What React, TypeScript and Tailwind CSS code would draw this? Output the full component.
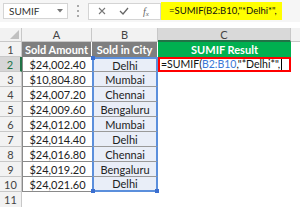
import React from "react";

const rows = [
  { n: 2, amt: "$24,002.40", city: "Delhi" },
  { n: 3, amt: "$10,804.80", city: "Mumbai" },
  { n: 4, amt: "$24,007.20", city: "Chennai" },
  { n: 5, amt: "$24,009.60", city: "Bengaluru" },
  { n: 6, amt: "$24,012.00", city: "Mumbai" },
  { n: 7, amt: "$24,014.40", city: "Delhi" },
  { n: 8, amt: "$24,016.80", city: "Chennai" },
  { n: 9, amt: "$24,019.20", city: "Bengaluru" },
  { n: 10, amt: "$24,021.60", city: "Delhi" },
];

const font = { fontFamily: "Lato, 'Open Sans', sans-serif" };

function FormulaBar() {
  return (
    <div className="flex h-[22px] items-center bg-[#f6f6f6]">
      <div className="ml-[3px] flex h-[16px] w-[65px] items-center justify-between border border-[#d4d4d4] bg-white pl-[5px] pr-[4px] text-[10px] text-[#333]">
        <span>SUMIF</span>
        <svg width="6" height="4" viewBox="0 0 6 4">
          <path d="M0 0h6L3 3.5z" fill="#777" />
        </svg>
      </div>
      <div className="ml-[9px] flex h-[12px] w-[2px] flex-col justify-between">
        <span className="block h-[2px] w-[2px] bg-[#aaa]" />
        <span className="block h-[2px] w-[2px] bg-[#aaa]" />
        <span className="block h-[2px] w-[2px] bg-[#aaa]" />
      </div>
      <div className="ml-[9px] flex h-[17px] w-[73px] items-center border border-[#d4d4d4] bg-white text-[#666]">
        <svg className="ml-[9px]" width="8" height="8" viewBox="0 0 8 8">
          <path d="M1 1l6 6M7 1L1 7" stroke="#777" strokeWidth="1.1" />
        </svg>
        <svg className="ml-[13px]" width="10" height="8" viewBox="0 0 10 8">
          <path d="M1 4l3 3 5-6" stroke="#666" strokeWidth="1.3" fill="none" />
        </svg>
        <span className="ml-[14px] text-[10px] italic" style={{ fontFamily: "'Liberation Serif', serif" }}>
          f<sub className="text-[7px]">x</sub>
        </span>
      </div>
      <div className="flex h-[18px] w-[121px] items-center whitespace-nowrap bg-[#ffff00] pl-[8px] text-[9.5px] text-[#111]">
        =SUMIF(B2:B10,"*Delhi*",
      </div>
    </div>
  );
}

export default function App() {
  return (
    <div className="h-[207px] w-[300px] overflow-hidden bg-white" style={font}>
      <FormulaBar />
      <div className="h-[6px] bg-white" />
      <div className="grid grid-cols-[22px_70px_66px_133px_1fr] grid-rows-[14px_repeat(11,15px)] text-[11px] leading-none">
        {/* header row */}
        <div className="relative border-b border-r border-[#c8c8c8] bg-[#f2f2f2]">
          <svg className="absolute bottom-[2px] right-[2px]" width="9" height="9" viewBox="0 0 9 9">
            <path d="M9 0v9H0z" fill="#c0c0c0" />
          </svg>
        </div>
        <div className="flex items-center justify-center border-b border-r border-[#c8c8c8] bg-[#f2f2f2] text-[#444]">A</div>
        <div className="flex items-center justify-center border-b border-r border-[#c8c8c8] bg-[#f2f2f2] text-[#444]">B</div>
        <div className="flex items-center justify-center border-b-2 border-r border-b-[#217346] border-r-[#c8c8c8] bg-[#d9d9d9] text-[#444]">C</div>
        <div className="border-b border-[#c8c8c8] bg-[#f2f2f2]" />

        {/* row 1 */}
        <div className="flex items-center justify-center border-b border-r border-[#c8c8c8] bg-[#f2f2f2] text-[#444]">1</div>
        <div className="flex items-center justify-center border-r border-white bg-[#7f7f7f] font-bold text-white">Sold Amount</div>
        <div className="flex items-center justify-center border-r border-white bg-[#7f7f7f] font-bold text-white">Sold in City</div>
        <div className="flex items-center justify-center bg-[#00b050] font-bold text-white">SUMIF Result</div>
        <div />

        {rows.map((r, i) => {
          const first = i === 0;
          const last = i === rows.length - 1;
          return (
            <React.Fragment key={r.n}>
              <div
                className={
                  first
                    ? "flex items-center justify-center border-b border-r-2 border-b-[#c8c8c8] border-r-[#217346] bg-[#d6d6d6] text-[#217346]"
                    : "flex items-center justify-center border-b border-r border-[#c8c8c8] bg-[#f2f2f2] text-[#444]"
                }
              >
                {r.n}
              </div>
              <div className="flex items-center justify-center border-b border-l border-[#8a8a8a] text-[#222]">{r.amt}</div>
              <div
                className={
                  "relative flex items-center justify-center border-x-2 border-x-[#5b8fdc] bg-[#e9eef8] text-[#222] " +
                  (last ? "border-b-2 border-b-[#5b8fdc]" : "border-b border-b-[#9a9a9a]") +
                  (first ? " border-t-2 border-t-[#5b8fdc]" : "")
                }
              >
                {r.city}
                {first && <span className="absolute -left-[3px] -top-[3px] h-[4px] w-[4px] bg-[#3b6fd0]" />}
                {last && (
                  <>
                    <span className="absolute -bottom-[3px] -left-[3px] h-[4px] w-[4px] bg-[#3b6fd0]" />
                    <span className="absolute -bottom-[3px] -right-[3px] h-[4px] w-[4px] bg-[#3b6fd0]" />
                  </>
                )}
              </div>
              {first ? (
                <div className="flex items-center whitespace-nowrap border-2 border-[#ff0000] pl-[1px] text-[10.5px] text-[#111]">
                  =SUMIF(<span className="text-[#3a78d6]">B2:B10</span>,"*Delhi*",
                  <span className="ml-[1px] inline-block h-[11px] w-[1px] bg-black" />
                </div>
              ) : (
                <div />
              )}
              <div />
            </React.Fragment>
          );
        })}

        {/* row 11 */}
        <div className="flex items-center justify-center border-r border-[#c8c8c8] bg-[#f2f2f2] text-[#444]">11</div>
        <div />
        <div />
        <div />
        <div />
      </div>
    </div>
  );
}
